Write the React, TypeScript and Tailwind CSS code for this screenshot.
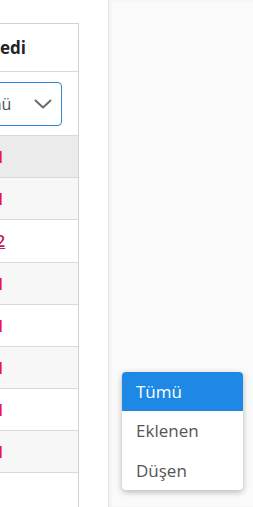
const rows = [
  { bg: 'bg-[#ebebeb]', value: '1', link: false, h: 'h-[42px]' },
  { bg: 'bg-[#f7f7f7]', value: '1', link: false, h: 'h-[42px]' },
  { bg: 'bg-white', value: '2', link: true, h: 'h-[43px]' },
  { bg: 'bg-[#f7f7f7]', value: '1', link: false, h: 'h-[42px]' },
  { bg: 'bg-white', value: '1', link: false, h: 'h-[42px]' },
  { bg: 'bg-[#f7f7f7]', value: '1', link: false, h: 'h-[42px]' },
  { bg: 'bg-white', value: '1', link: false, h: 'h-[42px]' },
  { bg: 'bg-[#f7f7f7]', value: '1', link: false, h: 'h-[42px]' },
]

function Chevron() {
  return (
    <svg width="18" height="10" viewBox="0 0 18 10" fill="none">
      <path d="M1.5 1.5 9 8.5l7.5-7" stroke="#6b6b6b" strokeWidth="2" strokeLinecap="round" strokeLinejoin="round" />
    </svg>
  )
}

export default function App() {
  return (
    <div
      className="flex h-[507px] w-[253px] overflow-hidden bg-white"
      style={{ fontFamily: '"Open Sans", "Noto Sans", sans-serif' }}
    >
      {/* table, scrolled so only its right edge shows */}
      <div className="flex w-[108px] shrink-0 flex-col bg-white pt-[23px]">
        <div className="flex w-[79px] flex-1 flex-col overflow-hidden border-t border-r border-[#d2d2d2]">
          <div className="flex h-[48px] shrink-0 items-center border-b border-[#d9d9d9]">
            <span className="ml-[-19px] whitespace-nowrap text-[17px] font-bold text-[#212529]">Kredi</span>
          </div>
          <div className="flex h-[64px] shrink-0 items-center border-b border-[#d9d9d9]">
            <div className="ml-[-50px] flex h-[44px] w-[112px] shrink-0 items-center justify-between rounded-[4px] border border-[#2f86d6] pl-[17px] pr-[9px]">
              <span className="text-[16px] text-[#495057]">Tümü</span>
              <Chevron />
            </div>
          </div>
          {rows.map((r, i) => (
            <div key={i} className={`flex shrink-0 items-center border-b border-[#d9d9d9] ${r.h} ${r.bg}`}>
              {r.link ? (
                <span className="ml-[-4px] text-[16px] font-semibold text-[#c2185b] underline">{r.value}</span>
              ) : (
                <span className="ml-[-5px] text-[16px] font-bold text-[#e8174d]">{r.value}</span>
              )}
            </div>
          ))}
        </div>
      </div>

      {/* side panel with open select menu */}
      <div className="relative flex-1 border-l border-[#e4e4e4] bg-[#fafafa] shadow-[inset_2px_0_3px_rgba(0,0,0,0.04)]">
        <div className="absolute left-[13px] top-[372px] w-[121px] overflow-hidden rounded-[4px] bg-white shadow-[0_2px_6px_rgba(0,0,0,0.28)]">
          <div className="flex h-[39px] items-center bg-[#1e88e5] px-[14px] text-[17px] text-white">Tümü</div>
          <div className="flex h-[40px] items-center px-[14px] text-[17px] text-[#555]">Eklenen</div>
          <div className="flex h-[39px] items-center px-[14px] text-[17px] text-[#555]">Düşen</div>
        </div>
      </div>
    </div>
  )
}
